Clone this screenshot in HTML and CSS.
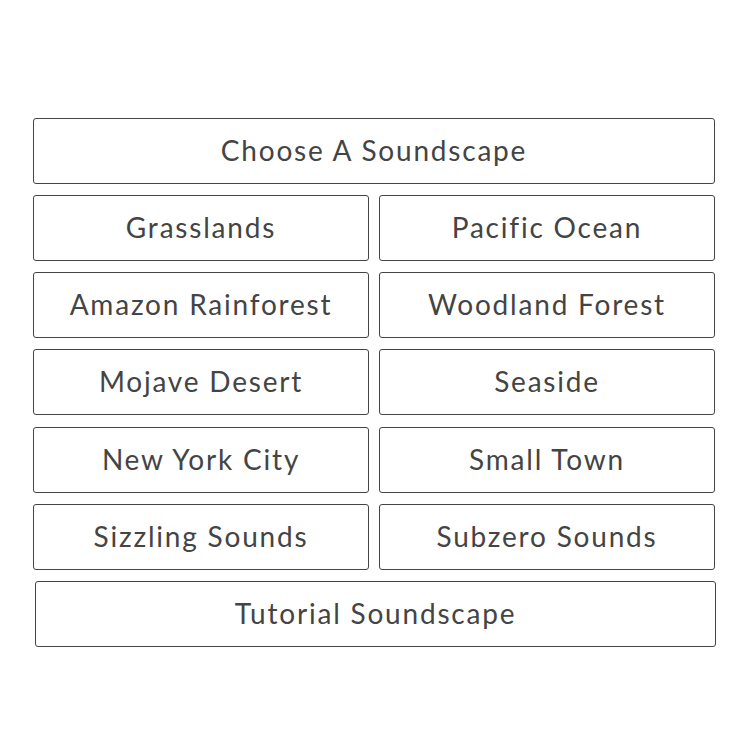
FILE: index.html
```html
<!DOCTYPE html>
<html>
<head>
<meta charset="utf-8">
<link rel="stylesheet" href="styles.css">
</head>
<body>
<div class="menu">
  <div class="btn wide">Choose A Soundscape</div>
  <div class="row">
    <div class="btn">Grasslands</div>
    <div class="btn">Pacific Ocean</div>
  </div>
  <div class="row">
    <div class="btn">Amazon Rainforest</div>
    <div class="btn">Woodland Forest</div>
  </div>
  <div class="row">
    <div class="btn">Mojave Desert</div>
    <div class="btn">Seaside</div>
  </div>
  <div class="row">
    <div class="btn">New York City</div>
    <div class="btn">Small Town</div>
  </div>
  <div class="row">
    <div class="btn">Sizzling Sounds</div>
    <div class="btn">Subzero Sounds</div>
  </div>
  <div class="btn wide last">Tutorial Soundscape</div>
</div>
</body>
</html>
```
FILE: styles.css
```css
html, body {
  margin: 0;
  padding: 0;
  background: #ffffff;
}
body {
  font-family: Lato, "Noto Sans", sans-serif;
  color: #444444;
}
.menu {
  display: flex;
  flex-direction: column;
  gap: 11.33px;
  width: 682px;
  margin-left: 33px;
  padding-top: 117.5px;
}
.row {
  display: flex;
  gap: 10px;
}
.btn {
  flex: 1;
  box-sizing: border-box;
  height: 66px;
  padding-bottom: 2px;
  border: 1.5px solid #444444;
  border-radius: 3px;
  display: flex;
  align-items: center;
  justify-content: center;
  font-size: 28px;
  font-weight: 400;
  letter-spacing: 1.8px;
}
.wide {
  flex: none;
}
.last {
  margin-left: 2px;
  width: 681px;
}
```
